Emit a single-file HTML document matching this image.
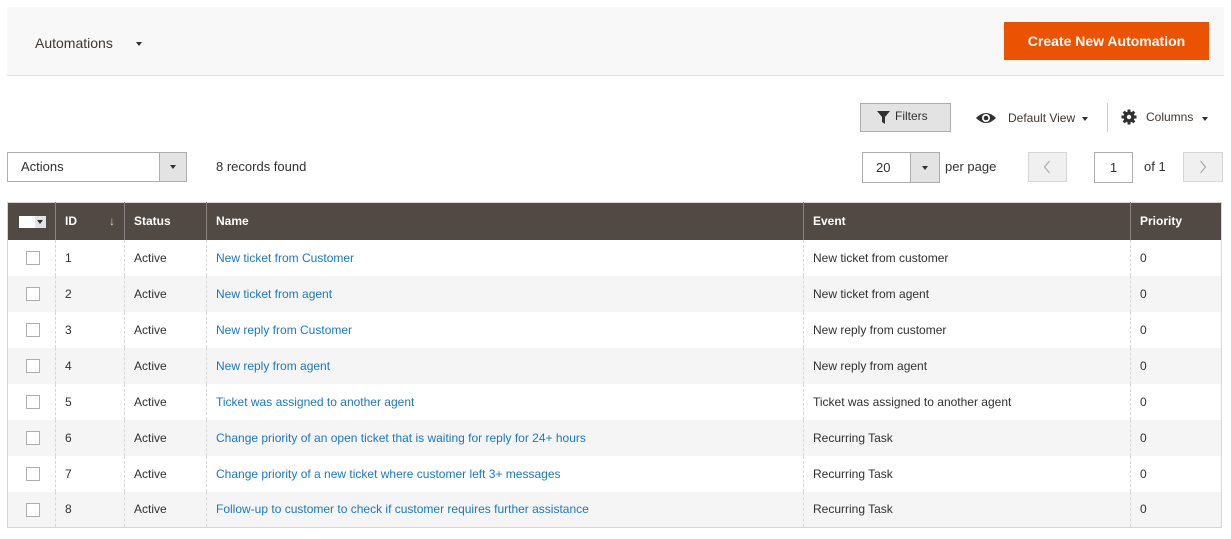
<!DOCTYPE html>
<html><head><style>
*{box-sizing:border-box;margin:0;padding:0}
body{width:1231px;height:539px;background:#fff;font-family:"Liberation Sans",sans-serif;font-size:12px;color:#303030;position:relative;overflow:hidden}
.a{position:absolute}
.hdr{left:7px;top:7px;width:1217px;height:69px;background:#f8f8f8;border-bottom:1px solid #e3e3e3}
.btn{left:1004px;top:22px;width:205px;height:38px;background:#eb5202;color:#fff;font-weight:bold;font-size:14px;text-align:center;line-height:38px}
.box{border:1px solid #adadad;background:#fff}
.dd{background:#e3e3e3;border-left:1px solid #adadad}
.car{width:0;height:0;border-left:3.5px solid transparent;border-right:3.5px solid transparent;border-top:4px solid #303030}
table{position:absolute;left:7px;top:202px;width:1215px;border-collapse:collapse;border:1px solid #d6d6d6}
th{background:#514943;color:#fff;font-weight:bold;text-align:left;height:37px;padding:0 9px;border-left:1px solid #8a837f;font-size:12px}
td{height:36px;padding:0 9px;border-left:1px dashed #d6d6d6;font-size:12px}
tr:nth-child(odd) td{background:#f5f5f5}
td a{color:#1979c3;text-decoration:none}
.cb{display:inline-block;width:14px;height:14px;border:1px solid #adadad;background:#fff;margin-left:9px;vertical-align:middle}
</style></head><body>
<div class="a hdr"></div>
<div class="a" style="left:35px;top:35px;font-size:14px;color:#41362f">Automations</div>
<div class="a car" style="left:136px;top:42px"></div>
<div class="a btn">Create New Automation</div>

<div class="a" style="left:860px;top:103px;width:91px;height:29px;background:#e3e3e3;border:1px solid #adadad"></div>
<svg class="a" style="left:877px;top:111px" width="13" height="13" viewBox="0 0 13 13"><path d="M0 0H13L8 6V13L5 11V6Z" fill="#303030"/></svg>
<div class="a" style="left:895px;top:109px;font-size:12px">Filters</div>
<svg class="a" style="left:975px;top:111px" width="22" height="14" viewBox="0 0 22 14"><path d="M1 7Q11 -3 21 7Q11 17 1 7Z" fill="#303030"/><circle cx="11" cy="7" r="4" fill="#fff"/><circle cx="11" cy="7" r="2.3" fill="#303030"/></svg>
<div class="a" style="left:1008px;top:111px;font-size:12px;color:#41362f">Default View</div>
<div class="a car" style="left:1082px;top:117px"></div>
<div class="a" style="left:1107px;top:103px;width:1px;height:29px;background:#ccc"></div>
<svg class="a" style="left:1121px;top:109px" width="16" height="16" viewBox="0 0 16 16"><g fill="#303030"><circle cx="8" cy="8" r="5.5"/><rect x="6.5" y="0.5" width="3" height="15"/><rect x="0.5" y="6.5" width="15" height="3"/><rect x="6.5" y="0.5" width="3" height="15" transform="rotate(45 8 8)"/><rect x="6.5" y="0.5" width="3" height="15" transform="rotate(-45 8 8)"/></g><circle cx="8" cy="8" r="2.2" fill="#fff"/></svg>
<div class="a" style="left:1146px;top:110px;font-size:12px;color:#41362f">Columns</div>
<div class="a car" style="left:1202px;top:117px"></div>

<div class="a box" style="left:7px;top:152px;width:180px;height:30px"></div>
<div class="a dd" style="left:159px;top:153px;width:27px;height:28px"></div>
<div class="a car" style="left:170px;top:165px"></div>
<div class="a" style="left:21px;top:159px;font-size:13px">Actions</div>
<div class="a" style="left:216px;top:159px;font-size:13px">8 records found</div>

<div class="a box" style="left:862px;top:152px;width:78px;height:31px"></div>
<div class="a dd" style="left:910px;top:153px;width:29px;height:29px"></div>
<div class="a car" style="left:922px;top:166px"></div>
<div class="a" style="left:876px;top:160px;font-size:13px">20</div>
<div class="a" style="left:945px;top:159px;font-size:13px">per page</div>
<div class="a" style="left:1028px;top:152px;width:39px;height:30px;background:#f0f0f0;border:1px solid #d6d6d6"></div>
<svg class="a" style="left:1043px;top:160px" width="8" height="14" viewBox="0 0 8 14"><path d="M6.5 1L1.5 7L6.5 13" fill="none" stroke="#aaa" stroke-width="1.2"/></svg>
<div class="a box" style="left:1094px;top:152px;width:39px;height:31px;text-align:center;line-height:29px;font-size:13px">1</div>
<div class="a" style="left:1144px;top:159px;font-size:13px">of 1</div>
<div class="a" style="left:1183px;top:152px;width:40px;height:30px;background:#f0f0f0;border:1px solid #d6d6d6"></div>
<svg class="a" style="left:1199px;top:160px" width="8" height="14" viewBox="0 0 8 14"><path d="M1.5 1L6.5 7L1.5 13" fill="none" stroke="#aaa" stroke-width="1.2"/></svg>

<table>
<tr><th style="width:48px;border-left:none;padding:0 0 0 11px"><span style="display:inline-block;width:16px;height:12px;background:#fff;vertical-align:middle"></span><span style="display:inline-block;width:11px;height:12px;background:#e3e3e3;vertical-align:middle;position:relative"><span class="car" style="position:absolute;left:2px;top:4px;border-top-color:#303030"></span></span></th>
<th style="width:69px">ID<span style="float:right;color:#e3d6a8">&#8595;</span></th><th style="width:82px">Status</th><th style="width:597px">Name</th><th style="width:327px">Event</th><th>Priority</th></tr>
<tr><td style="border-left:none"><span class="cb"></span></td><td>1</td><td>Active</td><td><a>New ticket from Customer</a></td><td>New ticket from customer</td><td>0</td></tr>
<tr><td style="border-left:none"><span class="cb"></span></td><td>2</td><td>Active</td><td><a>New ticket from agent</a></td><td>New ticket from agent</td><td>0</td></tr>
<tr><td style="border-left:none"><span class="cb"></span></td><td>3</td><td>Active</td><td><a>New reply from Customer</a></td><td>New reply from customer</td><td>0</td></tr>
<tr><td style="border-left:none"><span class="cb"></span></td><td>4</td><td>Active</td><td><a>New reply from agent</a></td><td>New reply from agent</td><td>0</td></tr>
<tr><td style="border-left:none"><span class="cb"></span></td><td>5</td><td>Active</td><td><a>Ticket was assigned to another agent</a></td><td>Ticket was assigned to another agent</td><td>0</td></tr>
<tr><td style="border-left:none"><span class="cb"></span></td><td>6</td><td>Active</td><td><a>Change priority of an open ticket that is waiting for reply for 24+ hours</a></td><td>Recurring Task</td><td>0</td></tr>
<tr><td style="border-left:none"><span class="cb"></span></td><td>7</td><td>Active</td><td><a>Change priority of a new ticket where customer left 3+ messages</a></td><td>Recurring Task</td><td>0</td></tr>
<tr><td style="border-left:none"><span class="cb"></span></td><td>8</td><td>Active</td><td><a>Follow-up to customer to check if customer requires further assistance</a></td><td>Recurring Task</td><td>0</td></tr>
</table>
</body></html>
